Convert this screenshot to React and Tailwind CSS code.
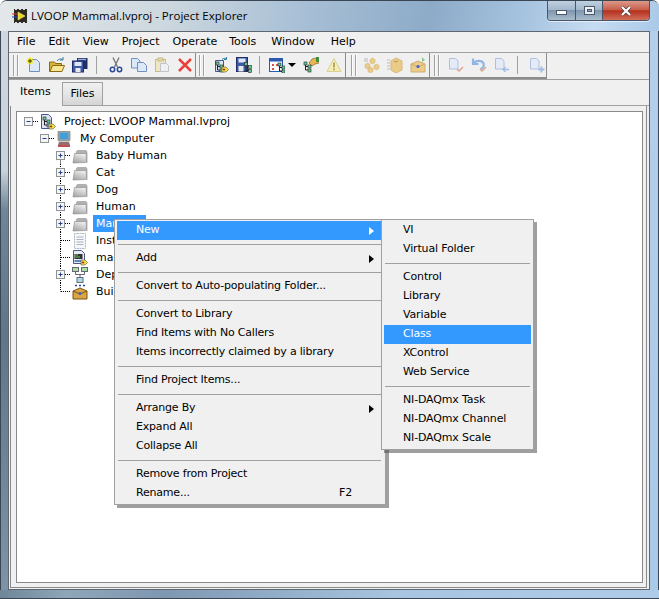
import { useId } from "react";

const font = "font-['DejaVu_Sans',sans-serif]";

// little doc shape used by several toolbar icons
const Doc = ({ fill = "#dbe8f8", stroke = "#6f8fc0" }) => (
    <path d="M3.500 2.500h7l3 3v9h-10z" fill={fill} stroke={stroke} />
);

// project tree glyph: three green nodes on a stem
const Nodes = ({ x = 0, y = 0 }) => (
    <g transform={`translate(${x} ${y})`}>
        <path d="M1.500 1v7M1.500 4.500h3M1.500 8h3" stroke="#222" fill="none" />
        <rect x="0" y="0" width="3" height="3" fill="#6c9" stroke="#222" strokeWidth=".6" />
        <rect x="4" y="3" width="3" height="3" fill="#6c9" stroke="#222" strokeWidth=".6" />
        <rect x="4" y="7" width="3" height="3" fill="#6c9" stroke="#222" strokeWidth=".6" />
    </g>
);

const Svg = ({ children, className = "" }) => (
    <svg viewBox="0 0 16 16" width="16" height="16" className={`shrink-0 ${className}`}>{children}</svg>
);

const NewIcon = () => (
    <Svg>
        <Doc />
        <path d="M4 0v7.500M.5 4h7M1.500 1.500l5 5M6.500 1.500l-5 5" stroke="#f7ea00" strokeWidth="1.300" />
        <path d="M4 2v4M2 4h4" stroke="#111" strokeWidth=".8" />
    </Svg>
);
const OpenIcon = () => (
    <Svg>
        <path d="M.5 14.500V5h5l1 1.500h6v8z" fill="#d8b33c" stroke="#8a6a10" />
        <path d="M1 14.500L3.500 8.500h12L13 14.500z" fill="#f8e596" stroke="#8a6a10" />
        <path d="M8 4c1.500-2 3.500-2.500 5.500-1.500M14 0v3h-3" fill="none" stroke="#2f7f9f" />
    </Svg>
);
const SaveAllIcon = () => (
    <Svg>
        <rect x="5" y="1" width="10.500" height="11" fill="#1f2f68" />
        <path d="M6 2.500h8" stroke="#9fb0dc" strokeWidth="1.500" />
        <rect x=".5" y="4" width="11" height="11" fill="#3b5aa8" stroke="#1d2d66" />
        <rect x="2.500" y="5" width="7" height="4" fill="#dfe6f5" />
        <rect x="3.500" y="11" width="5" height="4" fill="#e8e8e8" />
    </Svg>
);
const CutIcon = () => (
    <Svg>
        <path d="M5 .5l4.500 9.500M11 .5L6.500 10" stroke="#7a7a7a" strokeWidth="1.400" />
        <circle cx="4.500" cy="12.500" r="2.200" fill="none" stroke="#2a4a9a" strokeWidth="1.500" />
        <circle cx="11.500" cy="12.500" r="2.200" fill="none" stroke="#2a4a9a" strokeWidth="1.500" />
    </Svg>
);
const CopyIcon = () => (
    <Svg>
        <path d="M.5 1.500h6l2.500 2.500v7H.5z" fill="#dbe8f8" stroke="#7090c0" />
        <path d="M6.500 5.500h6l3 3v6h-9z" fill="#dbe8f8" stroke="#7090c0" />
    </Svg>
);
const PasteIcon = () => (
    <Svg>
        <rect x="1.500" y="2.500" width="10" height="12" fill="#efe6c4" stroke="#c9bb8a" />
        <rect x="4" y="1" width="5" height="3" fill="#e4d9b0" stroke="#c9bb8a" />
        <path d="M6.500 6.500h6l2 2v6h-8z" fill="#f0f0ee" stroke="#c0c4cc" />
    </Svg>
);
const DeleteIcon = () => (
    <Svg>
        <path d="M2 2l12 12M14 2L2 14" stroke="#e8413c" strokeWidth="2.500" />
    </Svg>
);
const NewProjIcon = () => (
    <Svg>
        <path d="M2.500 3.500h8v11h-8z" fill="#dbe3f5" stroke="#46598f" />
        <Nodes x={3} y={5} />
        <path d="M9 2.500c1.500-1.500 3-1.500 4-.5M13.500 0v2.500H11" fill="none" stroke="#2f7f9f" />
        <path d="M9 10h4l2.500 2.500L13 15H9z" fill="#f4e23c" stroke="#555" strokeWidth=".6" />
        <path d="M11 11.300v2.400M9.800 12.500h2.400" stroke="#a01818" strokeWidth=".8" />
    </Svg>
);
const SaveProjIcon = () => (
    <Svg>
        <rect x=".5" y=".5" width="11" height="14" fill="#3b5aa8" stroke="#1d2d66" />
        <rect x="2.500" y="1.500" width="7" height="4" fill="#dfe6f5" />
        <rect x="2.500" y="9" width="5" height="5.500" fill="#e8e8e8" />
        <Nodes x={8.500} y={5.500} />
    </Svg>
);
const TableIcon = () => (
    <Svg>
        <rect x=".5" y="1.500" width="13" height="13" fill="#fff" stroke="#2a5bb0" />
        <rect x=".5" y="1.500" width="13" height="3" fill="#2a5bb0" />
        <path d="M3 7h2v2H3zM7 7h2v2H7zM3 11h2v2H3z" fill="#d9534f" />
        <Nodes x={9} y={6} />
    </Svg>
);
const HandIcon = () => (
    <Svg>
        <path d="M6 6l3-4 4-1h3v5l-4 1-3 2z" fill="#e8b850" stroke="#8a6020" strokeWidth=".7" />
        <rect x="13" y="0" width="3" height="5" fill="#3c8f3c" />
        <Nodes x={1} y={5} />
    </Svg>
);
const WarnIcon = () => (
    <Svg>
        <path d="M8 1.500l7 13H1z" fill="#f6eeb0" stroke="#d8cf96" />
        <path d="M8 5.500v5" stroke="#b0a060" strokeWidth="1.800" />
        <path d="M8 11.500v1.800" stroke="#b0a060" strokeWidth="1.800" />
    </Svg>
);
const Box = ({ x = 0, y = 0 }) => (
    <g transform={`translate(${x} ${y})`}>
        <path d="M1 2.500L3.500 1 6 2.500v3L3.500 7 1 5.500z" fill="#eacb8a" stroke="#cfae6a" strokeWidth=".5" />
    </g>
);
const ClassesIcon = () => (
    <Svg>
        <Box x={5} y={0} />
        <Box x={0} y={5} />
        <Box x={9} y={6} />
        <Box x={3} y={9} />
        <path d="M0 2h4M0 4h4" stroke="#bbb" />
    </Svg>
);
const BigBoxIcon = () => (
    <Svg>
        <path d="M0 3h3M0 6h3M0 9h3M0 12h3" stroke="#bbb" />
        <path d="M4 4l5-3 6 3v9l-6 3-5-3z" fill="#eacb8a" stroke="#d8b873" />
        <path d="M7 4l2 1 2-1" stroke="#b8965a" fill="none" />
    </Svg>
);
const PkgIcon = ({ faded }) => (
    <Svg>
        <path d="M1 7l7-3 7 3v8H1z" fill={faded ? "#eacb8a" : "#d9a441"} stroke={faded ? "#cfae6a" : "#7a5412"} />
        <path d="M1 7l7 3 7-3" fill="none" stroke={faded ? "#cfae6a" : "#7a5412"} />
        <circle cx="8" cy="9.500" r="1.500" fill="#3a5fd0" />
        {faded
            ? <path d="M12 0l3 3-3 2z" fill="#8fc98f" />
            : <path d="M3 1.500h2M7 1.500h2M11 1.500h2" stroke="#1f3fae" strokeWidth="1.500" />}
    </Svg>
);
const Tick = () => <path d="M9 12l2 2 4-4" fill="none" stroke="#dba08c" strokeWidth="1.300" />;
const PaleDoc = () => <path d="M1.500 1.500h6l2.500 2.500v8h-8.500z" fill="#e4ebf6" stroke="#b0c0dc" />;
const CheckDocIcon = () => <Svg><PaleDoc /><Tick /></Svg>;
const UndoIcon = () => (
    <Svg>
        <path d="M2 1.500v5.500h5.500M2.500 6.500C5 3 11 3 12.500 6.500c1 2.500-.5 4.500-3 5.500" fill="none" stroke="#8fb6e4" strokeWidth="2.200" />
        <Tick />
    </Svg>
);
const BackDocIcon = () => (
    <Svg>
        <PaleDoc />
        <path d="M15 12.500H9M11.500 10L9 12.500l2.500 2.500" fill="none" stroke="#9fbce6" strokeWidth="1.300" />
    </Svg>
);
const PlusDocIcon = () => (
    <Svg>
        <PaleDoc />
        <path d="M12.500 9.500v6M9.500 12.500h6" stroke="#9fbce6" strokeWidth="1.800" />
    </Svg>
);

const Folder = () => {
    const id = useId();
    return (
        <Svg>
            <defs>
                <linearGradient id={id} x1="0.7" y1="0" x2="0.2" y2="1">
                    <stop offset="0" stopColor="#f2f2f2" />
                    <stop offset="1" stopColor="#a4a4a4" />
                </linearGradient>
            </defs>
            <path d="M2.500 14L4 3.500 5.500 2H14l1 1v11z" fill="#b0b0b0" />
            <path d="M1 15l1.500-9.500H14l.5 9z" fill={`url(#${id})`} stroke="#8a8a8a" strokeWidth=".6" />
            <path d="M15.500 3.500V15" stroke="#dcdcdc" />
        </Svg>
    );
};
const ProjectIcon = () => (
    <Svg>
        <path d="M1.500 .5h7l3 3v11h-10z" fill="#dbe3f5" stroke="#46598f" />
        <Nodes x={3} y={3} />
        <path d="M9 10h4l2.500 2.500L13 15H9z" fill="#f4e23c" stroke="#555" strokeWidth=".6" />
        <path d="M11 11.300v2.400M9.800 12.500h2.400" stroke="#a01818" strokeWidth=".8" />
    </Svg>
);
const ComputerIcon = () => (
    <Svg>
        <rect x="2" y="0" width="12" height="10" rx="1" fill="#b8a8a8" stroke="#776" strokeWidth=".7" />
        <rect x="3.500" y="1.500" width="9" height="7" fill="#3fa0d8" />
        <path d="M3 11h10l1 3H2z" fill="#8f6f6f" />
        <rect x="2" y="14" width="12" height="2" fill="#c0504d" />
    </Svg>
);
const NoteIcon = () => (
    <Svg>
        <path d="M2.500 .5h11v15h-11z" fill="#f7f7f7" stroke="#b8bcc4" strokeDasharray="2 .5" />
        <path d="M4.500 4h7M4.500 6.500h7M4.500 9h7M4.500 11.500h7" stroke="#a8b4c8" />
    </Svg>
);
const ViIcon = () => (
    <Svg>
        <path d="M1.500 .5h8l3 3v10h-11z" fill="#e8eaf5" stroke="#46598f" />
        <rect x="2.500" y="4" width="8" height="5" fill="#333" />
        <path d="M3 5h3M3 7h5" stroke="#6c6" />
        <rect x="2.500" y="10" width="8" height="2" fill="#5a8ac8" />
        <path d="M9 10h4l2.500 2.500L13 15H9z" fill="#f4e23c" stroke="#555" strokeWidth=".6" />
        <path d="M11 11.300v2.400M9.800 12.500h2.400" stroke="#a01818" strokeWidth=".8" />
    </Svg>
);
const DepsIcon = () => (
    <Svg>
        <rect x=".5" y=".5" width="6" height="4" fill="#a8e0a0" stroke="#667" />
        <rect x="9.500" y=".5" width="6" height="4" fill="#a8e0a0" stroke="#667" />
        <path d="M3.500 4.500v3h9v-3M8 7.500v3" fill="none" stroke="#667" />
        <rect x="5" y="10.500" width="6" height="5" fill="#a8dce8" stroke="#667" />
    </Svg>
);

const TitleIcon = () => (
    <svg viewBox="0 0 16 16" width="16" height="16" className="ml-[12px] shrink-0">
        <rect x="2" y="1" width="13" height="14" fill="#2b2b22" />
        <path d="M3 1.500h2M7 1.500h2M11 1.500h2M3 14.500h2M7 14.500h2M11 14.500h2" stroke="#ddd" />
        <path d="M6 4l7 4-7 4z" fill="#e8d820" stroke="#fff7a0" strokeWidth=".5" />
        <path d="M0 6h6" stroke="#e03020" />
        <path d="M0 9h6" stroke="#2040d0" />
    </svg>
);

const menuItems = [
    ["File", "ml-[8px]"],
    ["Edit", "ml-[13px]"],
    ["View", "ml-[13px]"],
    ["Project", "ml-[13px]"],
    ["Operate", "ml-[13px]"],
    ["Tools", "ml-[12px]"],
    ["Window", "ml-[15px]"],
    ["Help", "ml-[16px]"],
];

const Grip = ({ className = "" }) => (
    <div className={`w-[6px] h-[21px] flex justify-between shrink-0 ${className}`}>
        <div className="w-[2px] border-l border-[#a0a0a0] bg-white/70" />
        <div className="w-[2px] border-l border-[#a0a0a0] bg-white/70" />
    </div>
);
const ToolSep = ({ className = "" }) => <div className={`w-px h-[18px] bg-[#a0a0a0] shrink-0 ${className}`} />;
const Tool = ({ children, className = "" }) => (
    <div className={`w-[23px] h-full flex items-center justify-center shrink-0 ${className}`}>{children}</div>
);

const Toolbar = () => (
    <div className="h-[27px] flex items-center border-b border-[#a0a0a0]">
        <div className="h-full w-[187px] flex items-center border-r border-b-2 border-[#8c8c8c] pl-[4px]">
            <Grip className="mr-[3px]" />
            <Tool><NewIcon /></Tool>
            <Tool><OpenIcon /></Tool>
            <Tool><SaveAllIcon /></Tool>
            <ToolSep className="ml-[5px] mr-[7px]" />
            <Tool><CutIcon /></Tool>
            <Tool><CopyIcon /></Tool>
            <Tool><PasteIcon /></Tool>
            <Tool className="w-[18px]"><DeleteIcon /></Tool>
        </div>
        <div className="h-full w-[150px] flex items-center border-r border-b-2 border-[#8c8c8c] pl-[3px]">
            <Grip className="mr-[4px]" />
            <Tool><NewProjIcon /></Tool>
            <Tool><SaveProjIcon /></Tool>
            <ToolSep className="ml-[4px] mr-[5px]" />
            <Tool><TableIcon /></Tool>
            <div className="w-0 h-0 border-x-[4px] border-x-transparent border-t-[4px] border-t-black mr-[3px] shrink-0" />
            <Tool><HandIcon /></Tool>
            <Tool><WarnIcon /></Tool>
        </div>
        <div className="h-full w-[84px] flex items-center border-r border-b-2 border-[#8c8c8c] pl-[5px]">
            <Grip className="mr-[3px]" />
            <Tool><ClassesIcon /></Tool>
            <Tool><BigBoxIcon /></Tool>
            <Tool className="w-[22px]"><PkgIcon faded /></Tool>
        </div>
        <div className="h-full w-[117px] flex items-center border-r border-b-2 border-[#8c8c8c] pl-[4px]">
            <Grip className="mr-[4px]" />
            <Tool><CheckDocIcon /></Tool>
            <Tool><UndoIcon /></Tool>
            <Tool><BackDocIcon /></Tool>
            <ToolSep className="ml-[4px] mr-[7px]" />
            <Tool className="w-[22px]"><PlusDocIcon /></Tool>
        </div>
    </div>
);

// dotted tree connector plus the optional +/- box, 18x17
const Connector = ({ box, down, up }) => (
    <svg viewBox="0 0 18 17" width="18" height="17" className="shrink-0">
        <path d="M9 8.500H18" stroke="#000" strokeDasharray="1 1" fill="none" />
        {(up || down) && (
            <path d={`M8.500 ${up ? 0 : 8.500}V${down ? 17 : 8.500}`} stroke="#000" strokeDasharray="1 1" fill="none" />
        )}
        {box && (
            <g>
                <rect x="4.500" y="4.500" width="8" height="8" fill="#f4f4f4" stroke="#8f9296" />
                <path d="M6.500 8.500h4" stroke="#27408b" />
                {box === "plus" && <path d="M8.500 6.500v4" stroke="#27408b" />}
            </g>
        )}
    </svg>
);

const levels = ["pl-[3px]", "pl-[19px]", "pl-[35px]"];

const TreeRow = ({ level, box, up, down, icon, label, selected }) => (
    <div className={`h-[17px] flex items-center ${levels[level]}`}>
        <Connector box={box} up={up} down={down} />
        <div className="ml-[2px] w-[16px] shrink-0">{icon}</div>
        <span className={`ml-[5px] px-[3px] h-[17px] leading-[17px] whitespace-nowrap ${selected ? "bg-[#3399ff] text-white" : ""}`}>{label}</span>
    </div>
);

const MenuRow = ({ label, active, arrow, shortcut }) => (
    <div className={`h-[19px] flex items-center pl-[19px] pr-[7px] ${active ? "bg-[#3399ff] text-white" : ""}`}>
        <span className="flex-1 whitespace-nowrap">{label}</span>
        {shortcut && <span className="mr-[22px]">{shortcut}</span>}
        {arrow && <div className={`w-0 h-0 border-y-[4px] border-y-transparent border-l-[5px] ${active ? "border-l-white" : "border-l-black"}`} />}
    </div>
);
const MenuSep = ({ className = "" }) => (
    <div className={`h-[9px] flex items-center ${className}`}><div className="h-px w-full bg-[#a0a0a0]" /></div>
);

const ContextMenu = () => (
    <div className="absolute left-[114px] top-[218px] w-[272px] border border-[#a0a0a0] bg-[#f0f0f0] py-px pl-[2px] pr-[4px] shadow-[3px_3px_0_rgba(80,80,80,0.55)] text-black tracking-[-0.2px]">
        <MenuRow label="New" active arrow />
        <MenuSep className="pl-px" />
        <MenuRow label="Add" arrow />
        <MenuSep className="pl-px" />
        <MenuRow label="Convert to Auto-populating Folder..." />
        <MenuSep className="pl-px" />
        <MenuRow label="Convert to Library" />
        <MenuRow label="Find Items with No Callers" />
        <MenuRow label="Items incorrectly claimed by a library" />
        <MenuSep className="pl-px" />
        <MenuRow label="Find Project Items..." />
        <MenuSep className="pl-px" />
        <MenuRow label="Arrange By" arrow />
        <MenuRow label="Expand All" />
        <MenuRow label="Collapse All" />
        <MenuSep className="pl-px" />
        <MenuRow label="Remove from Project" />
        <MenuRow label="Rename..." shortcut="F2" />
    </div>
);

const SubMenu = () => (
    <div className="absolute left-[381px] top-[218px] w-[153px] border border-[#a0a0a0] bg-[#f0f0f0] py-px px-[2px] shadow-[3px_3px_0_rgba(80,80,80,0.55)] text-black tracking-[-0.15px]">
        <MenuRow label="VI" />
        <MenuRow label="Virtual Folder" />
        <MenuSep className="px-[1px]" />
        <MenuRow label="Control" />
        <MenuRow label="Library" />
        <MenuRow label="Variable" />
        <MenuRow label="Class" active />
        <MenuRow label="XControl" />
        <MenuRow label="Web Service" />
        <MenuSep className="px-[1px]" />
        <MenuRow label="NI-DAQmx Task" />
        <MenuRow label="NI-DAQmx Channel" />
        <MenuRow label="NI-DAQmx Scale" />
    </div>
);

const CaptionButtons = () => (
    <div className="flex h-[20px] mr-[9px] rounded-b-[4px] overflow-hidden border border-t-0 border-[#47566a] shadow-[0_1px_0_rgba(255,255,255,0.6)]">
        <div className="w-[28px] flex items-center justify-center border-r border-[#47566a] bg-[linear-gradient(180deg,#bfd0e0_0%,#a3b8cc_45%,#7e96ad_50%,#a9bccd_100%)]">
            <div className="w-[11px] h-[5px] mt-[3px] bg-white border border-[#4a5a6c]" />
        </div>
        <div className="w-[27px] flex items-center justify-center border-r border-[#47566a] bg-[linear-gradient(180deg,#bfd0e0_0%,#a3b8cc_45%,#7e96ad_50%,#a9bccd_100%)]">
            <div className="w-[11px] h-[9px] bg-white/80 border border-[#4a5a6c] flex items-center justify-center">
                <div className="w-[5px] h-[3px] bg-[#8fa5ba] border border-[#4a5a6c]" />
            </div>
        </div>
        <div className="w-[46px] flex items-center justify-center bg-[linear-gradient(180deg,#dd9a8a_0%,#c8604c_45%,#b5301c_52%,#d0705c_100%)]">
            <svg viewBox="0 0 12 10" width="12" height="10">
                <path d="M2 1l8 8M10 1L2 9" stroke="#4a3a3a" strokeWidth="3.400" />
                <path d="M2 1l8 8M10 1L2 9" stroke="#fff" strokeWidth="2.200" />
            </svg>
        </div>
    </div>
);

export default function App() {
    return (
        <div className={`relative w-[659px] h-[599px] flex flex-col overflow-hidden text-[11px] text-black rounded-t-[7px] border-t border-[#3a4654] ${font}`}>
            <div className="h-[30px] flex items-start shrink-0 bg-[linear-gradient(100deg,#e4e8ea_0%,#cdd8df_25%,#a9c0d6_45%,#8dabc8_65%,#a7c4e0_80%,#c6dcf2_90%,#a9c9e8_100%)]">
                <div className="flex items-center h-[30px] flex-1 min-w-0">
                    <TitleIcon />
                    <span className="ml-[3px] text-[11.5px] font-['Open_Sans',sans-serif] whitespace-nowrap">LVOOP Mammal.lvproj - Project Explorer</span>
                </div>
                <CaptionButtons />
            </div>
            <div className="flex-1 flex min-h-0">
                <div className="w-[8px] shrink-0 border-l border-[#3a4654] bg-[linear-gradient(180deg,#cfd8de_0%,#c8d2d9_25%,#6f8598_32%,#5f768a_55%,#7e93a6_100%)]" />
                <div className="flex-1 flex flex-col min-w-0 border border-[#5f6670] bg-[#f0f0f0]">
                    <div className="h-[21px] flex items-center border-b border-[#a0a0a0] shrink-0">
                        {menuItems.map(([name, margin]) => (
                            <span key={name} className={margin}>{name}</span>
                        ))}
                    </div>
                    <Toolbar />
                    <div className="h-[26px] flex shrink-0 pl-px">
                        <div className="w-[52px] pl-[10px] pt-[4px]">Items</div>
                        <div className="w-[41px] mt-[2px] border border-[#a0a0a0] bg-[linear-gradient(180deg,#f0f0f0_0%,#e4e4e4_55%,#d4d4d4_100%)] flex items-center justify-center">Files</div>
                        <div className="flex-1 border-b border-[#a0a0a0]" />
                    </div>
                    <div className="flex-1 min-h-0 flex ml-px mr-[2px] mb-px border-x border-b border-[#8a8a8a] pl-[5px] pr-[3px] pt-[5px] pb-[4px]">
                        <div className="flex-1 bg-white border border-[#8a8a8a] pt-px overflow-hidden">
                            <TreeRow level={0} box="minus" icon={<ProjectIcon />} label="Project: LVOOP Mammal.lvproj" />
                            <TreeRow level={1} box="minus" icon={<ComputerIcon />} label="My Computer" />
                            <TreeRow level={2} box="plus" down icon={<Folder />} label="Baby Human" />
                            <TreeRow level={2} box="plus" up down icon={<Folder />} label="Cat" />
                            <TreeRow level={2} box="plus" up down icon={<Folder />} label="Dog" />
                            <TreeRow level={2} box="plus" up down icon={<Folder />} label="Human" />
                            <TreeRow level={2} box="plus" up down icon={<Folder />} label="Mammal" selected />
                            <TreeRow level={2} up down icon={<NoteIcon />} label="Instructions" />
                            <TreeRow level={2} up down icon={<ViIcon />} label="main.vi" />
                            <TreeRow level={2} box="plus" up down icon={<DepsIcon />} label="Dependencies" />
                            <TreeRow level={2} up icon={<PkgIcon />} label="Build Specifications" />
                        </div>
                    </div>
                </div>
                <div className="w-[9px] shrink-0 border-r border-[#3a4654] bg-[linear-gradient(180deg,#b4cfea_0%,#a9c9e8_100%)]" />
            </div>
            <div className="h-[9px] shrink-0 border-b border-[#3a4654] bg-[linear-gradient(90deg,#6f8598_0%,#8fa5b8_10%,#7e98b2_25%,#a8c4e0_60%,#aecbe8_100%)]" />
            <ContextMenu />
            <SubMenu />
        </div>
    );
}
